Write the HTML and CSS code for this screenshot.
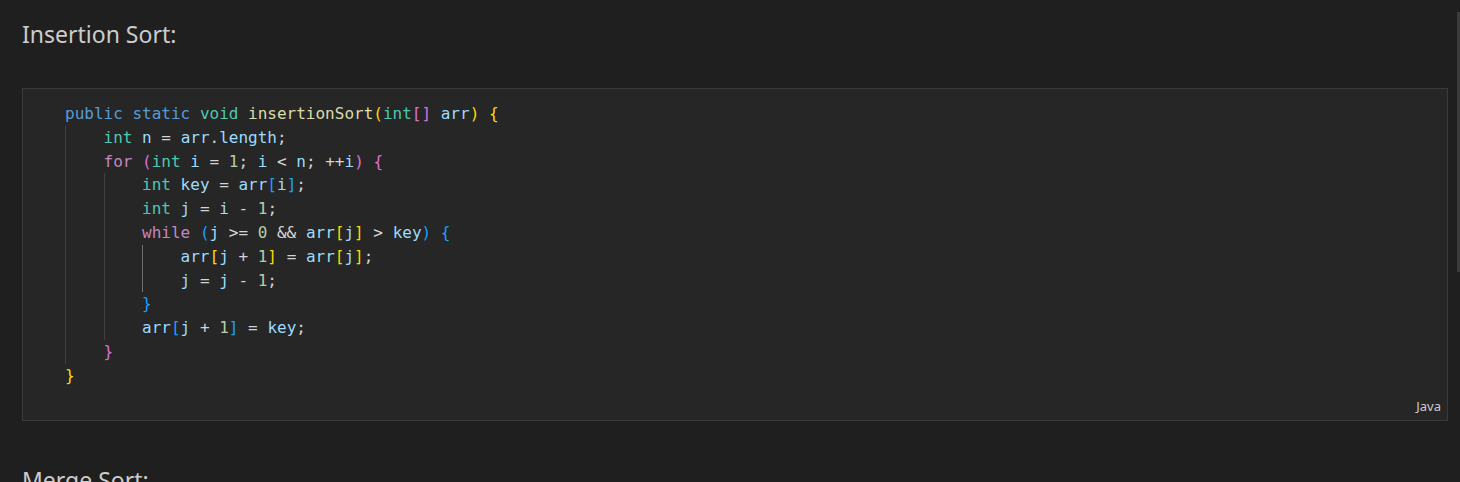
FILE: index.html
```html
<!DOCTYPE html>
<html lang="en">
<head>
<meta charset="utf-8">
<title>Sorting</title>
<link rel="stylesheet" href="styles.css">
</head>
<body>
<main class="page">
  <section class="section">
    <h2 class="title">Insertion Sort:</h2>
    <div class="codebox">
      <pre class="code"><div class="ln"><span class="kw">public</span> <span class="kw">static</span> <span class="ty">void</span> <span class="fn">insertionSort</span><span class="b1">(</span><span class="ty">int</span><span class="b2">[]</span> <span class="va">arr</span><span class="b1">)</span> <span class="b1">{</span></div><div class="ln"><span class="ig"></span><span class="ty">int</span> <span class="va">n</span> <span class="op">=</span> <span class="va">arr</span><span class="op">.</span><span class="va">length</span><span class="op">;</span></div><div class="ln"><span class="ig"></span><span class="ct">for</span> <span class="b2">(</span><span class="ty">int</span> <span class="va">i</span> <span class="op">=</span> <span class="nu">1</span><span class="op">;</span> <span class="va">i</span> <span class="op">&lt;</span> <span class="va">n</span><span class="op">;</span> <span class="op">++</span><span class="va">i</span><span class="b2">)</span> <span class="b2">{</span></div><div class="ln"><span class="ig"></span><span class="ig"></span><span class="ty">int</span> <span class="va">key</span> <span class="op">=</span> <span class="va">arr</span><span class="b3">[</span><span class="va">i</span><span class="b3">]</span><span class="op">;</span></div><div class="ln"><span class="ig"></span><span class="ig"></span><span class="ty">int</span> <span class="va">j</span> <span class="op">=</span> <span class="va">i</span> <span class="op">-</span> <span class="nu">1</span><span class="op">;</span></div><div class="ln"><span class="ig"></span><span class="ig"></span><span class="ct">while</span> <span class="b3">(</span><span class="va">j</span> <span class="op">&gt;=</span> <span class="nu">0</span> <span class="op">&amp;&amp;</span> <span class="va">arr</span><span class="b1">[</span><span class="va">j</span><span class="b1">]</span> <span class="op">&gt;</span> <span class="va">key</span><span class="b3">)</span> <span class="b3">{</span></div><div class="ln"><span class="ig"></span><span class="ig"></span><span class="ig active"></span><span class="va">arr</span><span class="b1">[</span><span class="va">j</span> <span class="op">+</span> <span class="nu">1</span><span class="b1">]</span> <span class="op">=</span> <span class="va">arr</span><span class="b1">[</span><span class="va">j</span><span class="b1">]</span><span class="op">;</span></div><div class="ln"><span class="ig"></span><span class="ig"></span><span class="ig active"></span><span class="va">j</span> <span class="op">=</span> <span class="va">j</span> <span class="op">-</span> <span class="nu">1</span><span class="op">;</span></div><div class="ln"><span class="ig"></span><span class="ig"></span><span class="b3">}</span></div><div class="ln"><span class="ig"></span><span class="ig"></span><span class="va">arr</span><span class="b3">[</span><span class="va">j</span> <span class="op">+</span> <span class="nu">1</span><span class="b3">]</span> <span class="op">=</span> <span class="va">key</span><span class="op">;</span></div><div class="ln"><span class="ig"></span><span class="b2">}</span></div><div class="ln"><span class="b1">}</span></div></pre>
      <div class="lang-row"><span class="lang">Java</span></div>
    </div>
  </section>
  <section class="section">
    <h2 class="title">Merge Sort:</h2>
  </section>
</main>
<div class="scrollbar"></div>
</body>
</html>
```

FILE: styles.css
```css
html, body {
  margin: 0;
  padding: 0;
  background: #1f1f1f;
  height: 100%;
  overflow: hidden;
}

body {
  font-family: "Noto Sans", "Open Sans", sans-serif;
  color: #cccccc;
}

.page {
  padding: 18px 12px 0 22px;
}

.section + .section {
  margin-top: 43px;
}

.title {
  margin: 0 0 38px 0;
  font-size: 23px;
  line-height: 32px;
  font-weight: 400;
  color: #cccccc;
}

.codebox {
  background: #262626;
  border: 1px solid #3a3a3a;
  padding: 13px 6px 5px 42px;
}

.code {
  margin: 0;
  font-family: "DejaVu Sans Mono", "Liberation Mono", monospace;
  font-size: 16px;
  line-height: 23.8px;
  color: #d4d4d4;
}

.ln {
  height: 23.8px;
  white-space: pre;
}

.ig {
  display: inline-block;
  width: 4ch;
  height: 23.8px;
  vertical-align: top;
  box-shadow: inset 1px 0 0 #404040;
}

.ig.active {
  box-shadow: inset 1px 0 0 #707070;
}

.kw { color: #569cd6; }
.ty { color: #4ec9b0; }
.fn { color: #dcdcaa; }
.va { color: #9cdcfe; }
.op { color: #d4d4d4; }
.nu { color: #b5cea8; }
.ct { color: #c586c0; }
.b1 { color: #ffd700; }
.b2 { color: #da70d6; }
.b3 { color: #179fff; }

.lang-row {
  display: flex;
  justify-content: flex-end;
  margin-top: 10px;
}

.lang {
  font-size: 13px;
  line-height: 17px;
  color: #cccccc;
}

.scrollbar {
  position: fixed;
  top: 12px;
  right: 0;
  width: 3px;
  height: 260px;
  background: #3c3c3c;
}
```
